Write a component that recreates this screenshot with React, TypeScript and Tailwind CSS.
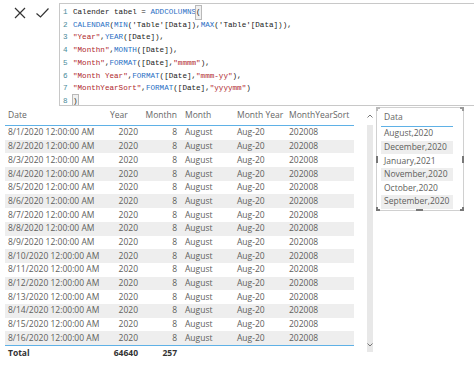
const fn = 'text-[#2a6fc4]';
const str = 'text-[#b0282d]';

type Tok = [string, string?];

const codeLines: Tok[][] = [
  [['Calender tabel = '], ['ADDCOLUMNS', fn], ['(', 'box']],
  [['CALENDAR', fn], ['('], ['MIN', fn], ["('Table'[Data]),"], ['MAX', fn], ["('Table'[Data])),"]],
  [['"Year"', str], [','], ['YEAR', fn], ['([Date]),']],
  [['"Monthn"', str], [','], ['MONTH', fn], ['([Date]),']],
  [['"Month"', str], [','], ['FORMAT', fn], ['([Date],'], ['"mmmm"', str], ['),']],
  [['"Month Year"', str], [','], ['FORMAT', fn], ['([Date],'], ['"mmm-yy"', str], ['),']],
  [['"MonthYearSort"', str], [','], ['FORMAT', fn], ['([Date],'], ['"yyyymm"', str], [')']],
  [[')', 'box']],
];

const rows = Array.from({ length: 16 }, (_, i) => `8/${i + 1}/2020 12:00:00 AM`);
const slicerItems = ['August,2020', 'December,2020', 'January,2021', 'November,2020', 'October,2020', 'September,2020'];

const Chevron = ({ up }: { up?: boolean }) => (
  <svg width="6" height="4" viewBox="0 0 6 4" fill="none" stroke="#777" strokeWidth="1">
    <path d={up ? 'M0.5 3.5L3 1L5.5 3.5' : 'M0.5 0.5L3 3L5.5 0.5'} />
  </svg>
);

const App = () => {
  return (
    <div className="w-[474px] h-[366px] overflow-hidden bg-white text-[#605e5c]" style={{ fontFamily: '"Open Sans", "Noto Sans", sans-serif' }}>
      {/* formula bar */}
      <div className="flex h-[106px]">
        <div className="w-[59px] flex gap-[10px] pl-[14px] pt-[7px]">
          <svg width="12" height="12" viewBox="0 0 12 12" fill="none" stroke="#333" strokeWidth="1.2">
            <path d="M1 1L11 11M11 1L1 11" />
          </svg>
          <svg width="13" height="12" viewBox="0 0 13 12" fill="none" stroke="#333" strokeWidth="1.2">
            <path d="M0.5 6.5L4.5 10L12.5 1.5" />
          </svg>
        </div>
        <div className="flex-1 mt-[3px] border border-[#c8c8c8] border-r-0 overflow-hidden pt-[2px] text-[7.6px] leading-[12.7px] text-[#222]" style={{ fontFamily: '"Liberation Mono", "DejaVu Sans Mono", monospace' }}>
          {codeLines.map((line, i) => (
            <div key={i} className="flex whitespace-pre">
              <span className="w-[13px] pl-[3px] text-[#4a8a9a]">{i + 1}</span>
              {line.map(([t, c], j) => (
                <span key={j} className={c === 'box' ? 'outline outline-[0.5px] outline-[#b9b9b9] bg-[#f0f0f0]' : c}>
                  {t}
                </span>
              ))}
            </div>
          ))}
        </div>
      </div>

      {/* lower area */}
      <div className="flex pl-[5px] text-[8.5px]">
        {/* table */}
        <div className="w-[349px]">
          <div className="flex h-[20px] items-center border-b border-[#5fb1e6] text-[#666]">
            <div className="w-[102px] pl-[3px]">Date</div>
            <div className="w-[34px] pl-[3px]">Year</div>
            <div className="w-[40px] pr-[4px] text-right">Monthn</div>
            <div className="w-[53px] pl-[4px]">Month</div>
            <div className="w-[52px] pl-[3px]">Month Year</div>
            <div className="flex-1 pl-[3px]">MonthYearSort</div>
          </div>
          {rows.map((d, i) => (
            <div key={d} className={`flex h-[13.7px] items-center ${i % 2 === 1 ? 'bg-[#eeeeee]' : ''}`}>
              <div className="w-[102px] pl-[3px] whitespace-nowrap">{d}</div>
              <div className="w-[34px] pr-[3px] text-right">2020</div>
              <div className="w-[40px] pr-[4px] text-right">8</div>
              <div className="w-[53px] pl-[4px]">August</div>
              <div className="w-[52px] pl-[3px]">Aug-20</div>
              <div className="flex-1 pl-[3px]">202008</div>
            </div>
          ))}
          <div className="flex h-[15px] items-center border-t border-[#5fb1e6] font-bold text-[#333]">
            <div className="w-[102px] pl-[3px]">Total</div>
            <div className="w-[34px] pr-[3px] text-right">64640</div>
            <div className="w-[40px] pr-[4px] text-right">257</div>
          </div>
        </div>

        {/* scrollbar */}
        <div className="ml-[13px] w-[6px] flex flex-col">
          <div className="h-[19px] flex items-center justify-center">
            <Chevron up />
          </div>
          <div className="h-[227px] bg-[#e8e8e8] flex flex-col justify-end items-center pb-[5px]">
            <Chevron />
          </div>
        </div>

        {/* slicer */}
        <div className="relative ml-[3px] mt-[1px] w-[88px] h-[104px] border border-[#d0d0d0] px-[4px]">
          <div className="h-[19px] flex items-center pl-[3px] border-b border-[#5fb1e6] text-[#666] w-[72px]">Data</div>
          {slicerItems.map((s, i) => (
            <div key={s} className={`h-[13.6px] w-[72px] flex items-center pl-[3px] ${i % 2 === 1 ? 'bg-[#eeeeee]' : ''}`}>
              {s}
            </div>
          ))}
          {/* resize handles */}
          <div className="absolute -left-[1px] -bottom-[1px] w-[4px] h-[4px] border-l-2 border-b-2 border-[#777]" />
          <div className="absolute -right-[1px] -bottom-[1px] w-[4px] h-[4px] border-r-2 border-b-2 border-[#777]" />
          <div className="absolute -right-[1px] -top-[1px] w-[4px] h-[4px] border-r-2 border-t-2 border-[#999]" />
          <div className="absolute -left-[1px] -top-[1px] w-[4px] h-[4px] border-l-2 border-t-2 border-[#bbb]" />
          <div className="absolute -left-[1px] top-[48px] w-[2px] h-[7px] bg-[#777]" />
          <div className="absolute -right-[1px] top-[48px] w-[2px] h-[7px] bg-[#777]" />
          <div className="absolute left-[39px] -bottom-[1px] w-[7px] h-[2px] bg-[#777]" />
        </div>
      </div>
    </div>
  );
};

export default App;
